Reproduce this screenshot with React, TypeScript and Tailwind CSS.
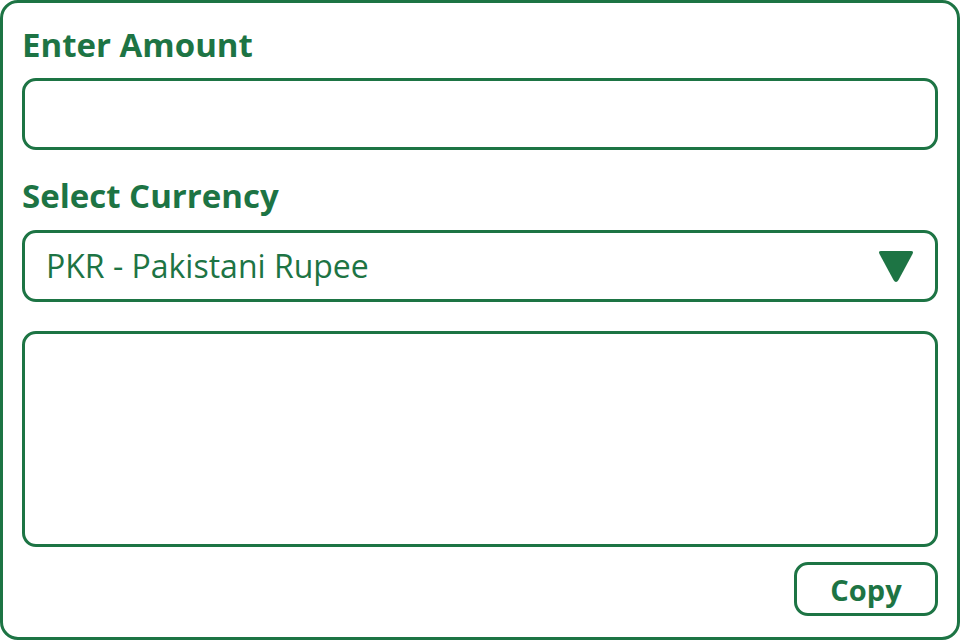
import React from 'react';

const green = 'text-[#1d7444]';

const App: React.FC = () => {
  return (
    <div className="w-[960px] h-[640px] bg-white" style={{ fontFamily: '"Open Sans", "Liberation Sans", sans-serif' }}>
      <div className="w-[960px] h-[640px] border-[3px] border-[#1d7444] rounded-[18px] px-[19px] pt-[22px] flex flex-col">
        {/* Amount */}
        <label className={`${green} text-[33px] leading-[40px] font-bold`}>Enter Amount</label>
        <input
          type="text"
          className="mt-[13px] h-[72px] w-full border-[3px] border-[#1d7444] rounded-[14px] outline-none px-5 text-[28px] text-[#1d7444]"
        />

        {/* Currency */}
        <label className={`${green} mt-[26px] text-[33px] leading-[40px] font-bold`}>Select Currency</label>
        <div className="mt-[14px] h-[72px] w-full border-[3px] border-[#1d7444] rounded-[14px] flex items-center justify-between pl-[21px] pr-[20px]">
          <span className={`${green} text-[32px] leading-none`}>PKR - Pakistani Rupee</span>
          <svg width="38" height="35" viewBox="0 0 38 35" className="mt-[1px]">
            <path d="M4 2 H34 Q37 2 35.5 5 L21.5 31 Q19 35 16.5 31 L2.5 5 Q1 2 4 2 Z" fill="#1d7444" />
          </svg>
        </div>

        {/* Result */}
        <textarea className="mt-[29px] h-[216px] w-full border-[3px] border-[#1d7444] rounded-[14px] outline-none resize-none p-4 text-[24px] text-[#1d7444]" />

        <div className="mt-[15px] flex justify-end">
          <button className={`${green} w-[144px] h-[54px] border-[3px] border-[#1d7444] rounded-[14px] text-[29px] font-bold leading-none`}>
            Copy
          </button>
        </div>
      </div>
    </div>
  );
};

export default App;
